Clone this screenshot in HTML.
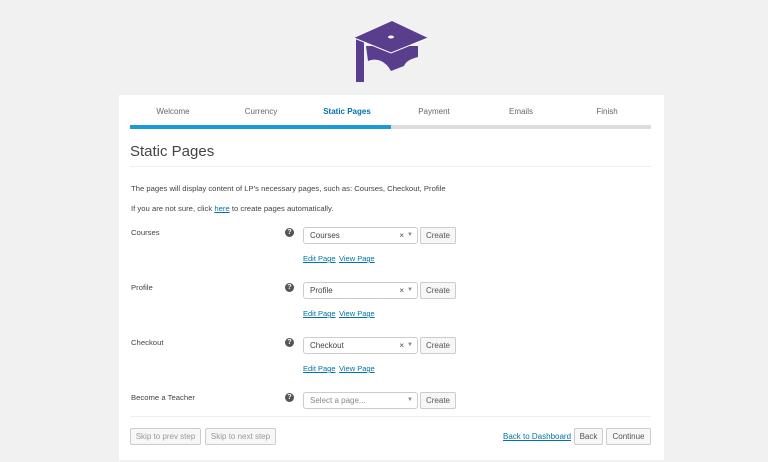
<!DOCTYPE html>
<html><head><style>
*{margin:0;padding:0;box-sizing:border-box}
body{width:768px;height:462px;background:#f1f1f1;font-family:"Liberation Sans",sans-serif;color:#444;position:relative;overflow:hidden}
.a{position:absolute}
.panel{left:119px;top:95px;width:545px;height:365px;background:#fff}
.tab{top:107px;font-size:8px;color:#666;text-align:center;width:90px}
.lbl{font-size:7.7px;color:#444;left:131px}
.q{width:9px;height:9px;border-radius:50%;background:#555;color:#fff;font-size:7px;font-weight:bold;text-align:center;line-height:9px;left:285px}
.sel{left:303px;width:115px;height:17px;border:1px solid #ccc;border-radius:3px;font-size:8px;line-height:15px;padding-left:6px;color:#444}
.sel .x{position:absolute;right:13px;top:0;font-size:8px}
.sel .ar{position:absolute;right:4px;top:0;font-size:6px;color:#888}
.btn{height:17px;border:1px solid #ccc;border-radius:2px;background:#f7f7f7;font-size:8px;line-height:15px;text-align:center;color:#555}
.lnk{left:303px;font-size:7.5px;color:#0073aa;text-decoration:underline}
</style></head><body>
<svg class="a" style="left:350px;top:15px" width="84" height="70" viewBox="350 15 84 70">
<path d="M366,46 L418,46 L418,57 Q406,60 404,66 L391,71 Q386,62 378,60 Q372,59 368,61 Z" fill="#5a3e8e"/>
<rect x="356" y="38" width="8" height="44" fill="#5a3e8e"/>
<polygon points="354,38 392,21 428,38 391,53" fill="#5a3e8e" stroke="#fff" stroke-width="1"/>
<polygon points="354,38 392,21 428,38" fill="#5a3e8e"/>
<ellipse cx="391" cy="37" rx="3" ry="1.5" fill="#fff"/>
</svg>
<div class="a panel"></div>
<div class="a tab" style="left:128px">Welcome</div>
<div class="a tab" style="left:216px">Currency</div>
<div class="a tab" style="left:302px;color:#0073aa;font-weight:bold">Static Pages</div>
<div class="a tab" style="left:389px">Payment</div>
<div class="a tab" style="left:476px">Emails</div>
<div class="a tab" style="left:562px">Finish</div>
<div class="a" style="left:130px;top:125px;width:521px;height:4px;background:#ddd"></div>
<div class="a" style="left:130px;top:125px;width:261px;height:4px;background:#1a9bd7"></div>
<div class="a" style="left:130px;top:143px;font-size:15px;color:#444">Static Pages</div>
<div class="a" style="left:130px;top:166px;width:521px;height:1px;background:#eee"></div>
<div class="a lbl" style="top:184px">The pages will display content of LP's necessary pages, such as: Courses, Checkout, Profile</div>
<div class="a lbl" style="top:204px">If you are not sure, click <span style="color:#0073aa;text-decoration:underline">here</span> to create pages automatically.</div>

<div class="a lbl" style="top:228px">Courses</div>
<div class="a q" style="top:228px">?</div>
<div class="a sel" style="top:227px">Courses<span class="x">×</span><span class="ar">▼</span></div>
<div class="a btn" style="left:420px;top:227px;width:36px">Create</div>
<div class="a lnk" style="top:254px">Edit Page</div><div class="a lnk" style="left:339px;top:254px">View Page</div>

<div class="a lbl" style="top:283px">Profile</div>
<div class="a q" style="top:283px">?</div>
<div class="a sel" style="top:282px">Profile<span class="x">×</span><span class="ar">▼</span></div>
<div class="a btn" style="left:420px;top:282px;width:36px">Create</div>
<div class="a lnk" style="top:309px">Edit Page</div><div class="a lnk" style="left:339px;top:309px">View Page</div>

<div class="a lbl" style="top:338px">Checkout</div>
<div class="a q" style="top:338px">?</div>
<div class="a sel" style="top:337px">Checkout<span class="x">×</span><span class="ar">▼</span></div>
<div class="a btn" style="left:420px;top:337px;width:36px">Create</div>
<div class="a lnk" style="top:364px">Edit Page</div><div class="a lnk" style="left:339px;top:364px">View Page</div>

<div class="a lbl" style="top:393px">Become a Teacher</div>
<div class="a q" style="top:393px">?</div>
<div class="a sel" style="top:392px;color:#888">Select a page...<span class="ar">▼</span></div>
<div class="a btn" style="left:420px;top:392px;width:36px">Create</div>
<div class="a" style="left:130px;top:416px;width:521px;height:1px;background:#eee"></div>

<div class="a btn" style="left:130px;top:428px;width:71px;color:#999">Skip to prev step</div>
<div class="a btn" style="left:205px;top:428px;width:71px;color:#999">Skip to next step</div>
<div class="a" style="left:503px;top:432px;font-size:8px;color:#0073aa;text-decoration:underline">Back to Dashboard</div>
<div class="a btn" style="left:574px;top:428px;width:29px">Back</div>
<div class="a btn" style="left:606px;top:428px;width:45px">Continue</div>
</body></html>
